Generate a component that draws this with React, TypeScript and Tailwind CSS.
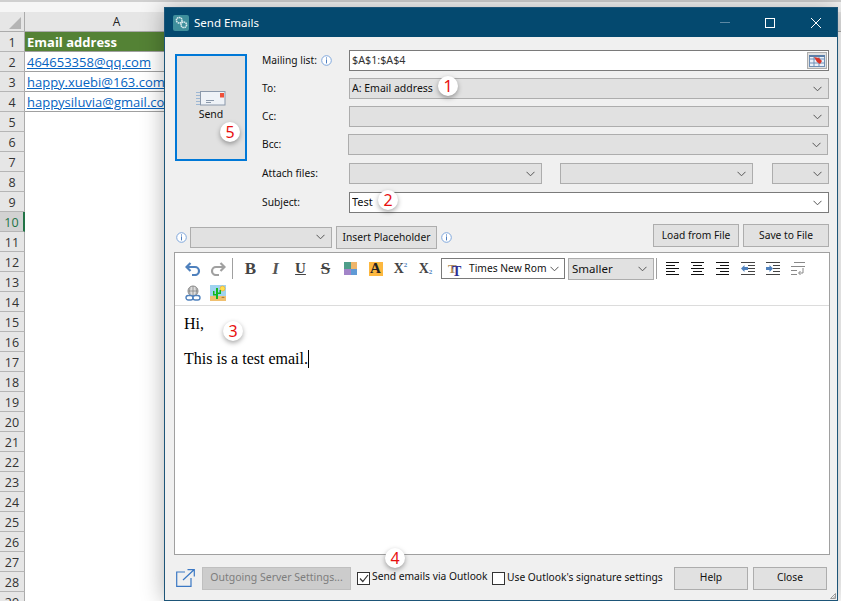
import type { ReactNode } from "react";

const rowNumbers = Array.from({ length: 29 }, (_, i) => i + 1);

function Chevron() {
  return (
    <svg width="9" height="6" viewBox="0 0 9 6" className="shrink-0">
      <path d="M0.5 0.8 L4.5 4.8 L8.5 0.8" fill="none" stroke="#555" strokeWidth="1" />
    </svg>
  );
}

function Info() {
  return (
    <svg width="11" height="11" viewBox="0 0 11 11" className="shrink-0">
      <circle cx="5.5" cy="5.5" r="4.8" fill="#fff" stroke="#7fa7dc" strokeWidth="1" />
      <rect x="5" y="2.4" width="1" height="1.2" fill="#4f7fbf" />
      <rect x="5" y="4.4" width="1" height="4" fill="#4f7fbf" />
    </svg>
  );
}

function Combo({ className, text, white }: { className: string; text?: string; white?: boolean }) {
  return (
    <div
      className={`flex items-center justify-between pl-[2px] pr-[6px] border ${
        white ? "bg-white border-[#7a7a7a]" : "bg-[#e1e1e1] border-[#adadad]"
      } ${className}`}
    >
      <span className="truncate text-[#111]">{text}</span>
      <Chevron />
    </div>
  );
}

function Row({ label, info, children }: { label: string; info?: boolean; children: ReactNode }) {
  return (
    <div className="flex items-center h-[21px] mb-[7px]">
      <div className="w-[87px] flex items-center gap-[4px] text-[#111]">
        {label}
        {info && <Info />}
      </div>
      {children}
    </div>
  );
}

function ToolBtn({ children, className = "" }: { children: ReactNode; className?: string }) {
  return <div className={`w-[25px] h-[22px] flex items-center justify-center ${className}`}>{children}</div>;
}

function Btn({ children, className }: { children: ReactNode; className: string }) {
  return (
    <div className={`flex items-center justify-center bg-[#e1e1e1] border border-[#adadad] text-[#111] ${className}`}>
      {children}
    </div>
  );
}

function Lines({ kind }: { kind: "left" | "center" | "right" }) {
  const rows =
    kind === "left"
      ? ["M0 .5h13", "M0 3.5h9", "M0 6.5h13", "M0 9.5h9", "M0 12.5h13"]
      : kind === "center"
        ? ["M0 .5h13", "M2 3.5h9", "M0 6.5h13", "M2 9.5h9", "M0 12.5h13"]
        : ["M0 .5h13", "M4 3.5h9", "M0 6.5h13", "M4 9.5h9", "M0 12.5h13"];
  return (
    <svg width="13" height="13" viewBox="0 0 13 13">
      <path d={rows.join(" ")} stroke="#111" strokeWidth="1" fill="none" />
    </svg>
  );
}

function Indent({ out }: { out?: boolean }) {
  return (
    <svg width="14" height="13" viewBox="0 0 14 13">
      <path d="M0 .5h14 M7 3.5h7 M7 6.5h7 M7 9.5h7 M0 12.5h14" stroke="#444" strokeWidth="1" fill="none" />
      {out ? (
        <path d="M0 6.5 L3.5 3 V5 H7 V8 H3.5 V10 Z" fill="#4f81bd" />
      ) : (
        <path d="M7 6.5 L3.5 3 V5 H0 V8 H3.5 V10 Z" fill="#4f81bd" />
      )}
    </svg>
  );
}

function Badge({ n, className }: { n: number; className: string }) {
  return (
    <div
      className={`absolute w-[20px] h-[20px] rounded-full bg-white shadow-[0_2px_5px_rgba(0,0,0,0.35)] flex items-center justify-center text-[#e81010] text-[16px] leading-none ${className}`}
    >
      {n}
    </div>
  );
}

function Sheet() {
  return (
    <div className="w-[841px] h-[601px] overflow-hidden bg-white font-['Open_Sans',sans-serif]">
      <div className="h-[12px] bg-[#f6f6f6] border-t-[2px] border-[#d0d0d0]" />
      <div className="flex h-[20px] bg-[#e6e6e6] border-b border-[#ababab]">
        <div className="w-[25px] border-r border-[#ababab] relative overflow-hidden">
          <svg width="12" height="12" viewBox="0 0 12 12" className="ml-[9px] mt-[5px]">
            <path d="M12 0 V12 H0 Z" fill="#b4b4b4" />
          </svg>
        </div>
        <div className="w-[184px] text-center text-[12px] leading-[19px] text-[#222] border-r border-[#ababab]">A</div>
      </div>
      <div className="flex">
        <div className="w-[25px] shrink-0">
          {rowNumbers.map((n) => (
            <div
              key={n}
              className={`h-[20px] text-center text-[12.5px] leading-[21px] text-[#333] border-b border-[#b5b5b5] border-r ${
                n === 10 ? "bg-[#d2d2d2] border-r-[#217346] border-r-2 text-[#217346]" : "bg-[#e6e6e6] border-r-[#ababab]"
              }`}
            >
              {n}
            </div>
          ))}
        </div>
        <div className="flex-1 text-[14px]">
          <div className="h-[20px] bg-[#548235] text-white font-bold pl-[2px] leading-[21px] text-[13px] w-[184px] border-b border-[#a0a0a0]">
            Email address
          </div>
          {["464653358@qq.com", "happy.xuebi@163.com", "happysiluvia@gmail.com"].map((m) => (
            <div key={m} className="h-[20px] w-[184px] pl-[2px] leading-[21px] border-b border-[#a0a0a0] text-[#0563c1] underline whitespace-nowrap overflow-hidden text-[13px]">
              {m}
            </div>
          ))}
        </div>
      </div>
    </div>
  );
}

function SendIcon() {
  return (
    <svg width="30" height="15" viewBox="0 0 30 15">
      <path d="M0 1.5h4 M0 4.5h4 M0 7.5h4 M0 10.5h4 M0 13.5h4" stroke="#9db7d4" strokeWidth="1" />
      <rect x="4.5" y=".5" width="24.5" height="13.5" fill="#eef2f7" stroke="#8b99ab" />
      <path d="M10 9.5h8 M10 11.5h5" stroke="#8b99ab" strokeWidth="1" />
      <rect x="24" y="2" width="4" height="4.5" fill="#f0503a" />
    </svg>
  );
}

function RangeIcon() {
  return (
    <svg width="16" height="12" viewBox="0 0 16 12">
      <rect x=".5" y=".5" width="15" height="11" fill="#eaf1fa" stroke="#6f8fb5" />
      <path d="M0 4h16 M0 8h16 M5 0v12 M10 0v12" stroke="#6f8fb5" strokeWidth="1" />
      <rect x="0" y="0" width="16" height="2" fill="#5b7fa8" />
      <path d="M5 2 L10 3 L13 6 L11 9 L8 7 Z" fill="#d8352a" />
    </svg>
  );
}

function Editor() {
  return (
    <div className="ml-[9px] w-[656px] h-[303px] border border-[#a0a0a0] bg-white flex flex-col mt-[4px]">
      <div className="h-[53px] border-b border-[#dcdcdc] pl-[5px] pt-[4px] shrink-0">
        <div className="flex items-center h-[23px]">
          <ToolBtn>
            <svg width="16" height="14" viewBox="0 0 16 14">
              <path d="M5.5 1 L1.5 5 L5.5 9 M2 5 H10 A4 4 0 0 1 10 13 H7" fill="none" stroke="#4f81bd" strokeWidth="2.2" />
            </svg>
          </ToolBtn>
          <ToolBtn>
            <svg width="16" height="14" viewBox="0 0 16 14">
              <path d="M10.5 1 L14.5 5 L10.5 9 M14 5 H6 A4 4 0 0 0 6 13 H9" fill="none" stroke="#a0a0a0" strokeWidth="2.2" />
            </svg>
          </ToolBtn>
          <div className="w-px h-[21px] bg-[#a0a0a0] ml-[2px] mr-[5px]" />
          <ToolBtn className="font-['Liberation_Serif',serif] font-bold text-[17px] text-[#444]">B</ToolBtn>
          <ToolBtn className="font-['Liberation_Serif',serif] italic font-bold text-[17px] text-[#555]">I</ToolBtn>
          <ToolBtn className="font-['Liberation_Serif',serif] font-bold text-[15px] text-[#444]">
            <span className="underline">U</span>
          </ToolBtn>
          <ToolBtn className="font-['Liberation_Serif',serif] font-bold text-[17px] text-[#444]">
            <span className="line-through px-[2px]">S</span>
          </ToolBtn>
          <ToolBtn>
            <div className="grid grid-cols-2 w-[13px] h-[13px]">
              <div className="bg-[#4f9e8a]" />
              <div className="bg-[#efb56a]" />
              <div className="bg-[#a284c8]" />
              <div className="bg-[#5f9ad6]" />
            </div>
          </ToolBtn>
          <ToolBtn>
            <div className="w-[14px] h-[14px] bg-[#fdb83f] flex items-center justify-center font-['Liberation_Serif',serif] font-bold text-[15px] leading-none text-[#222]">A</div>
          </ToolBtn>
          <ToolBtn className="font-['Liberation_Serif',serif] font-bold text-[14px] text-[#444]">
            X<span className="text-[7px] text-[#4f81bd] -mt-[7px]">2</span>
          </ToolBtn>
          <ToolBtn className="font-['Liberation_Serif',serif] font-bold text-[14px] text-[#444]">
            X<span className="text-[7px] text-[#4f81bd] mt-[8px]">2</span>
          </ToolBtn>
          <div className="ml-[3px] w-[124px] h-[21px] border border-[#7a7a7a] flex items-center pl-[6px] pr-[5px]">
            <span className="relative w-[21px] h-[14px] font-['Liberation_Serif',serif] font-bold">
              <span className="absolute left-0 -top-[3px] text-[13px] text-[#a98a5c]">T</span>
              <span className="absolute left-[4px] -top-[1px] text-[14px] text-[#2e3192]">T</span>
            </span>
            <span className="flex-1 text-[#111] whitespace-nowrap">Times New Rom</span>
            <Chevron />
          </div>
          <div className="ml-[3px] w-[86px] h-[22px] bg-[#e1e1e1] border border-[#adadad] flex items-center justify-between pl-[3px] pr-[6px] text-[#111] text-[11.5px]">
            Smaller
            <Chevron />
          </div>
          <div className="w-px h-[21px] bg-[#a0a0a0] mx-[2px]" />
          <div className="flex items-center ml-px">
            <ToolBtn><Lines kind="left" /></ToolBtn>
            <ToolBtn><Lines kind="center" /></ToolBtn>
            <ToolBtn><Lines kind="right" /></ToolBtn>
            <ToolBtn><Indent out /></ToolBtn>
            <ToolBtn><Indent /></ToolBtn>
            <ToolBtn>
              <svg width="14" height="13" viewBox="0 0 14 13">
                <path d="M3 .5h11 M0 4.5h14 M0 8.5h6 M0 12.5h6 M12 6v5h-4 M9.5 9l-2 2 2 2" stroke="#888" strokeWidth="1" fill="none" />
              </svg>
            </ToolBtn>
          </div>
        </div>
        <div className="flex items-center h-[24px] mt-px">
          <ToolBtn>
            <svg width="16" height="16" viewBox="0 0 16 16">
              <circle cx="8" cy="6" r="5" fill="#ddd" stroke="#888" />
              <path d="M3 6h10 M8 1v10 M5 2.5q-1 3.5 0 7 M11 2.5q1 3.5 0 7" stroke="#888" strokeWidth=".8" fill="none" />
              <rect x="1" y="10.5" width="7" height="4.5" rx="2.2" fill="#fff" stroke="#4f81bd" strokeWidth="1.4" />
              <rect x="8" y="10.5" width="7" height="4.5" rx="2.2" fill="#fff" stroke="#4f81bd" strokeWidth="1.4" />
            </svg>
          </ToolBtn>
          <ToolBtn>
            <svg width="16" height="16" viewBox="0 0 16 16">
              <rect width="16" height="16" fill="#9fd3f0" />
              <rect y="11" width="16" height="5" fill="#f0c070" />
              <circle cx="12.5" cy="3.5" r="2.5" fill="#ffe14d" stroke="#f0a030" strokeWidth=".6" />
              <path d="M6 3h2v11H6z M3 6h1.5v3H6v1.5H3z M9.5 5H11v4H8V7.5h1.5z" fill="#12b81f" />
              <path d="M11 13l2-1.5 2 1.5z" fill="#b07a3a" />
            </svg>
          </ToolBtn>
        </div>
      </div>
      <div className="flex-1 pl-[9px] pt-[9px] font-['Liberation_Serif',serif] text-[16px] leading-[18px] text-black">
        <p>Hi,</p>
        <p className="mt-[17px] flex items-center">
          This is a test email.
          <span className="inline-block w-px h-[18px] bg-black" />
        </p>
      </div>
    </div>
  );
}

function Dialog() {
  return (
    <div className="absolute left-[164px] top-[7px] w-[674px] h-[594px] bg-[#f0f0f0] border border-[#1d5578] shadow-[0_0_22px_rgba(0,0,0,0.3)] flex flex-col font-['Noto_Sans',sans-serif] text-[10.25px]">
      <div className="h-[29px] bg-[#04496f] flex items-center pl-[8px] shrink-0 text-white">
        <div className="w-[16px] h-[16px] rounded-[2px] bg-[#3f8f9c] flex items-center justify-center">
          <svg width="13" height="13" viewBox="0 0 13 13">
            <circle cx="4.2" cy="4.2" r="2.8" fill="none" stroke="#dcecee" strokeWidth="1.5" strokeDasharray="1.6 .5" />
            <circle cx="8.8" cy="8.8" r="2.8" fill="none" stroke="#dcecee" strokeWidth="1.5" strokeDasharray="1.6 .5" />
          </svg>
        </div>
        <span className="ml-[5px] text-[11.5px] font-normal">Send Emails</span>
        <div className="ml-auto flex items-center">
          <div className="w-[10px] h-px bg-[#5d88a3]" />
          <div className="w-[10px] h-[10px] border border-white ml-[35px]" />
          <svg width="10" height="10" viewBox="0 0 10 10" className="ml-[36px] mr-[16px]">
            <path d="M0 0L10 10M10 0L0 10" stroke="#fff" strokeWidth="1" />
          </svg>
        </div>
      </div>

      <div className="flex pl-[10px] pr-[8px] pt-[13px] shrink-0">
        <div className="mt-[4px] w-[73px] h-[107px] border-2 border-[#0078d7] bg-[#e1e1e1] flex flex-col items-center pt-[35px] text-[#111] text-[10.5px]">
          <SendIcon />
          <span className="mt-px">Send</span>
        </div>
        <div className="ml-[15px] flex-1 flex flex-col">
          <Row label="Mailing list:" info>
            <div className="flex-1 h-[21px] bg-white border border-[#7a7a7a] flex items-center justify-between pl-[2px] pr-px text-[#333] text-[10.75px]">
              $A$1:$A$4
              <div className="w-[20px] h-[17px] bg-[#e1e1e1] border border-[#adadad] flex items-center justify-center">
                <RangeIcon />
              </div>
            </div>
          </Row>
          <Row label="To:">
            <Combo className="flex-1 h-[21px] text-[10.5px]" text="A: Email address" />
          </Row>
          <Row label="Cc:">
            <Combo className="flex-1 h-[21px]" />
          </Row>
          <Row label="Bcc:">
            <Combo className="flex-1 h-[21px] -ml-px mr-px" />
          </Row>
          <div className="mt-px">
            <Row label="Attach files:">
              <div className="flex-1 flex">
                <Combo className="w-[193px] h-[21px]" />
                <Combo className="ml-[18px] w-[193px] h-[21px]" />
                <Combo className="ml-[19px] w-[57px] h-[21px]" />
              </div>
            </Row>
          </div>
          <div className="mt-px">
            <Row label="Subject:">
              <Combo className="flex-1 h-[21px] text-[11px]" text="Test" white />
            </Row>
          </div>
        </div>
      </div>

      <div className="flex items-end h-[24px] mt-[4px] pl-[11px] pr-[8px] shrink-0">
        <div className="flex items-center gap-[3px]">
          <Info />
          <Combo className="w-[142px] h-[21px]" />
          <Btn className="ml-px w-[101px] h-[23px] -mb-px">Insert Placeholder</Btn>
          <div className="ml-px"><Info /></div>
        </div>
        <div className="ml-auto flex gap-[4px] self-start">
          <Btn className="w-[86px] h-[23px]">Load from File</Btn>
          <Btn className="w-[86px] h-[23px]">Save to File</Btn>
        </div>
      </div>

      <Editor />

      <div className="relative flex-1 flex items-start pt-[11px] pl-[11px]">
        <div className="flex items-center h-[24px]">
          <svg width="19" height="18" viewBox="0 0 19 18">
            <path d="M9 3H.7V17.3H15V9" fill="none" stroke="#3b78c4" strokeWidth="1.2" />
            <path d="M7 11L18 .8 M11.5.7H18.3V7.5" fill="none" stroke="#3b78c4" strokeWidth="1.2" />
          </svg>
          <div className="ml-[7px] w-[149px] h-[23px] bg-[#cccccc] border border-[#bfbfbf] flex items-center justify-center text-[#7d7d7d] text-[10.5px]">
            Outgoing Server Settings...
          </div>
          <div className="ml-[6px] w-[13px] h-[13px] border border-[#333] bg-white flex items-center justify-center">
            <svg width="10" height="9" viewBox="0 0 10 9">
              <path d="M1 4.5L3.8 7.5L9 1" fill="none" stroke="#333" strokeWidth="1.2" />
            </svg>
          </div>
          <span className="ml-[2px] text-[#111] -mt-[2px] whitespace-nowrap w-[120px]">Send emails via Outlook</span>
          <div className="w-[13px] h-[13px] border border-[#333] bg-white" />
          <span className="ml-[2px] text-[#111] whitespace-nowrap w-[167px]">Use Outlook's signature settings</span>
          <Btn className="w-[74px] h-[23px]">Help</Btn>
          <Btn className="ml-[5px] w-[74px] h-[23px]">Close</Btn>
        </div>
        <svg width="6" height="6" viewBox="0 0 6 6" className="absolute right-[1px] bottom-[1px]">
          <path d="M5.5 .5V5.5H.5Z M5.5 3 L3 5.5" fill="none" stroke="#9a9a9a" strokeWidth="1" />
        </svg>
      </div>
    </div>
  );
}

export default function App() {
  return (
    <div className="relative w-[841px] h-[601px] overflow-hidden">
      <Sheet />
      <Dialog />
      <div className="font-['Noto_Sans',sans-serif]">
        <Badge n={1} className="left-[438px] top-[76px]" />
        <Badge n={2} className="left-[378px] top-[190px]" />
        <Badge n={3} className="left-[223px] top-[321px]" />
        <Badge n={4} className="left-[385px] top-[548px]" />
        <Badge n={5} className="left-[220px] top-[122px]" />
      </div>
    </div>
  );
}
